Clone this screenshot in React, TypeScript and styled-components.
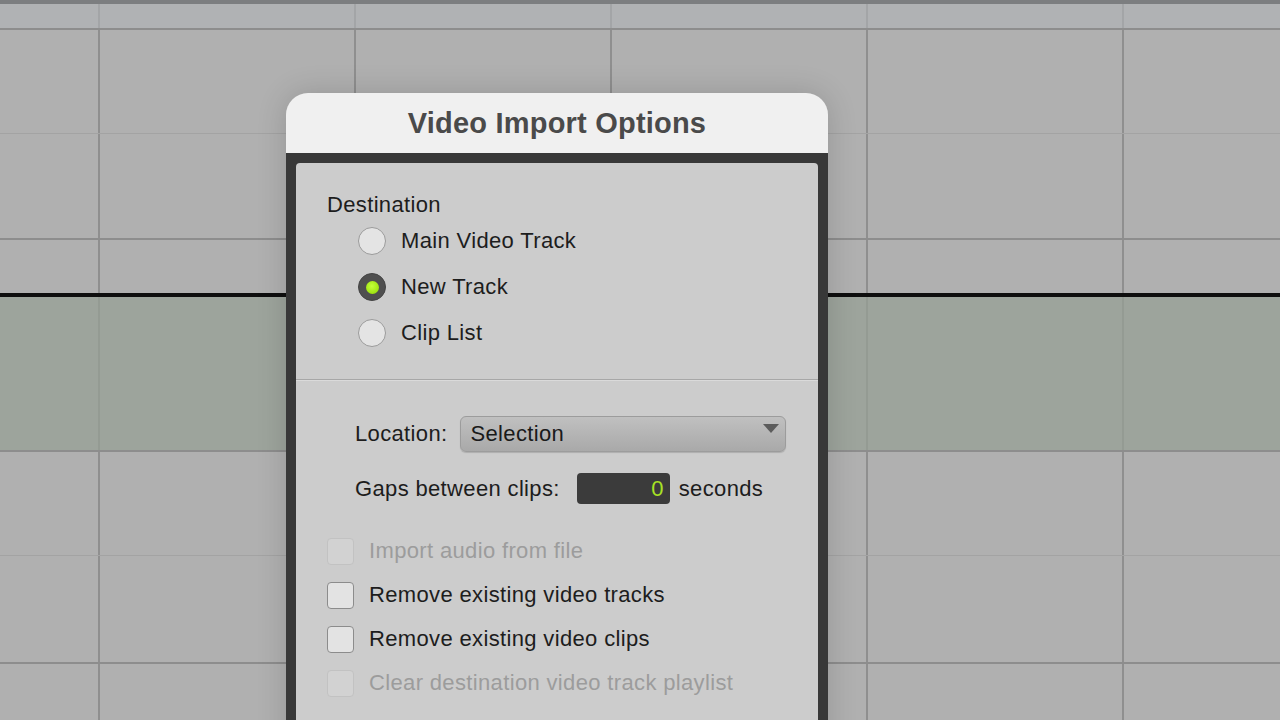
import React from 'react'
import styled, { createGlobalStyle } from 'styled-components'

const GlobalStyle = createGlobalStyle`
  html, body {
    margin: 0;
    padding: 0;
    width: 1280px;
    height: 720px;
    overflow: hidden;
    background: #b0b0b0;
    font-family: 'Liberation Sans', Arial, Helvetica, sans-serif;
  }
`

// timeline behind the dialog
const Timeline = styled.div`
  position: relative;
  width: 1280px;
  height: 720px;
  overflow: hidden;
  display: flex;
  flex-direction: column;
  background-image: repeating-linear-gradient(
    to right,
    #8f8f8f 0 2px,
    transparent 2px 256px
  );
  background-position: 98px 0;
`

const TopEdge = styled.div`
  flex: none;
  height: 4px;
  background: #7c7e80;
`

const Ruler = styled.div`
  flex: none;
  height: 24px;
  background-color: rgba(176, 180, 184, 0.6);
  border-bottom: 2px solid #8d8d8d;
`

const Lane = styled.div<{ $height: number; $tone?: 'plain' | 'green'; $edge?: 'major' | 'minor' | 'black' }>`
  flex: none;
  height: ${(p) => p.$height}px;
  box-sizing: border-box;
  background-color: ${(p) => (p.$tone === 'green' ? 'rgba(150, 160, 148, 0.7)' : 'transparent')};
  border-bottom: ${(p) =>
    p.$edge === 'black'
      ? '4px solid #0e0e0e'
      : p.$edge === 'minor'
        ? '1px solid #a3a3a3'
        : p.$edge === 'major'
          ? '2px solid #8d8d8d'
          : 'none'};
`

// dialog
const Dialog = styled.div`
  position: absolute;
  left: 286px;
  top: 93px;
  width: 542px;
  box-shadow: 0 0 30px rgba(0, 0, 0, 0.16);
  border-radius: 22px 22px 0 0;
`

const TitleBar = styled.div`
  height: 60px;
  background: #f0f0f0;
  border-radius: 22px 22px 0 0;
  display: flex;
  align-items: center;
  justify-content: center;
`

const Title = styled.h1`
  margin: 0;
  font-size: 29px;
  font-weight: 700;
  letter-spacing: 0.2px;
  color: #4a4a4a;
`

const Frame = styled.div`
  background: #383838;
  padding: 10px 10px 0 10px;
`

const Panel = styled.div`
  background: #cccccc;
  border-radius: 4px 4px 0 0;
  padding: 29px 0 60px 0;
  font-size: 22px;
  letter-spacing: 0.35px;
  color: #1d1d1d;
`

const SectionLabel = styled.div`
  line-height: 26px;
  padding-left: 31px;
`

const RadioList = styled.div`
  padding-left: 62px;
  display: flex;
  flex-direction: column;
`

const OptionRow = styled.label<{ $height: number; $disabled?: boolean }>`
  height: ${(p) => p.$height}px;
  display: flex;
  align-items: center;
  gap: 15px;
  color: ${(p) => (p.$disabled ? '#9c9c9c' : '#1d1d1d')};
`

const Radio = styled.span<{ $checked?: boolean }>`
  flex: none;
  width: 28px;
  height: 28px;
  box-sizing: border-box;
  border-radius: 50%;
  display: flex;
  align-items: center;
  justify-content: center;
  background: ${(p) => (p.$checked ? '#4f4f4f' : '#e4e4e4')};
  border: 1.5px solid ${(p) => (p.$checked ? '#444' : '#9b9b9b')};

  &::after {
    content: '';
    display: ${(p) => (p.$checked ? 'block' : 'none')};
    width: 13px;
    height: 13px;
    border-radius: 50%;
    background: radial-gradient(circle at 45% 40%, #c4ff3a, #8fd800);
  }
`

const Separator = styled.hr`
  margin: 23px 0 0 0;
  border: none;
  height: 1px;
  background: #a7a7a7;
  box-shadow: 0 1px 0 #dadada;
`

const Settings = styled.div`
  padding: 36px 0 0 59px;
  display: flex;
  flex-direction: column;
  gap: 21px;
`

const FieldRow = styled.div`
  display: flex;
  align-items: center;
`

const Select = styled.div`
  margin-left: 13px;
  width: 326px;
  height: 36px;
  box-sizing: border-box;
  border-radius: 6px;
  border: 1px solid #9c9c9c;
  background: linear-gradient(#c0c0c0, #a9a9a9);
  box-shadow: 0 1px 1px rgba(0, 0, 0, 0.15);
  display: flex;
  align-items: center;
  justify-content: space-between;
  padding: 0 6px 0 9px;
  color: #1a1a1a;
`

const Caret = styled.span`
  align-self: flex-start;
  margin-top: 7px;
  width: 0;
  height: 0;
  border-left: 8px solid transparent;
  border-right: 8px solid transparent;
  border-top: 9px solid #5c5c5c;
`

const NumberField = styled.div`
  margin: 0 9px 0 17px;
  width: 93px;
  height: 31px;
  box-sizing: border-box;
  border-radius: 4px;
  background: #3b3b3b;
  color: #a8e224;
  display: flex;
  align-items: center;
  justify-content: flex-end;
  padding-right: 6px;
`

const CheckList = styled.div`
  margin-top: 25px;
  padding-left: 31px;
  display: flex;
  flex-direction: column;
`

const Checkbox = styled.span<{ $disabled?: boolean }>`
  flex: none;
  width: 27px;
  height: 27px;
  box-sizing: border-box;
  border-radius: 4px;
  background: ${(p) => (p.$disabled ? '#d2d2d2' : '#e3e3e3')};
  border: 1.5px solid ${(p) => (p.$disabled ? '#c2c2c2' : '#8c8c8c')};
`

const destinations = [
  { label: 'Main Video Track', checked: false },
  { label: 'New Track', checked: true },
  { label: 'Clip List', checked: false },
]

const options = [
  { label: 'Import audio from file', disabled: true },
  { label: 'Remove existing video tracks', disabled: false },
  { label: 'Remove existing video clips', disabled: false },
  { label: 'Clear destination video track playlist', disabled: true },
]

export default function App () {
  return (
    <>
      <GlobalStyle />
      <Timeline>
        <TopEdge />
        <Ruler />
        <Lane $height={104} $edge='minor' />
        <Lane $height={106} $edge='major' />
        <Lane $height={57} $edge='black' />
        <Lane $height={155} $tone='green' $edge='major' />
        <Lane $height={104} $edge='minor' />
        <Lane $height={108} $edge='major' />
        <Lane $height={60} />

        <Dialog>
          <TitleBar>
            <Title>Video Import Options</Title>
          </TitleBar>
          <Frame>
            <Panel>
              <SectionLabel>Destination</SectionLabel>
              <RadioList>
                {destinations.map((d) => (
                  <OptionRow key={d.label} $height={46}>
                    <Radio $checked={d.checked} />
                    {d.label}
                  </OptionRow>
                ))}
              </RadioList>

              <Separator />

              <Settings>
                <FieldRow>
                  Location:
                  <Select>
                    Selection
                    <Caret />
                  </Select>
                </FieldRow>
                <FieldRow>
                  Gaps between clips:
                  <NumberField>0</NumberField>
                  seconds
                </FieldRow>
              </Settings>

              <CheckList>
                {options.map((o) => (
                  <OptionRow key={o.label} $height={44} $disabled={o.disabled}>
                    <Checkbox $disabled={o.disabled} />
                    {o.label}
                  </OptionRow>
                ))}
              </CheckList>
            </Panel>
          </Frame>
        </Dialog>
      </Timeline>
    </>
  )
}
